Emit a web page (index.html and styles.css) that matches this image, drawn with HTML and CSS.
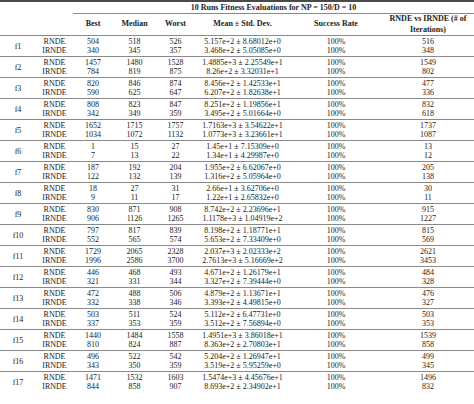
FILE: index.html
```html
<!DOCTYPE html>
<html>
<head>
<meta charset="utf-8">
<link rel="stylesheet" href="styles.css">
</head>
<body>
<table class="results">
  <colgroup>
    <col class="c-fn"><col class="c-alg"><col class="c-best"><col class="c-med"><col class="c-worst"><col class="c-mean"><col class="c-sr"><col class="c-vs">
  </colgroup>
  <thead>
    <tr class="title-row">
      <th class="blank"></th><th class="blank"></th>
      <th class="title" colspan="6">10 Runs Fitness Evaluations for NP = 150/D = 10</th>
    </tr>
    <tr class="head-row">
      <th></th><th></th>
      <th>Best</th><th>Median</th><th>Worst</th><th>Mean ± Std. Dev.</th><th>Success Rate</th><th>RNDE vs IRNDE (# of<br>Iterations)</th>
    </tr>
  </thead>
  <tbody>
    <tr><td>f1</td><td>RNDE<br>IRNDE</td><td>504<br>340</td><td>518<br>345</td><td>526<br>357</td><td>5.157e+2 ± 8.68012e+0<br>3.468e+2 ± 5.05085e+0</td><td>100%<br>100%</td><td>516<br>348</td></tr>
    <tr><td>f2</td><td>RNDE<br>IRNDE</td><td>1457<br>784</td><td>1480<br>819</td><td>1528<br>875</td><td>1.4885e+3 ± 2.25549e+1<br>8.26e+2 ± 3.32031e+1</td><td>100%<br>100%</td><td>1549<br>802</td></tr>
    <tr><td>f3</td><td>RNDE<br>IRNDE</td><td>820<br>590</td><td>846<br>625</td><td>874<br>647</td><td>8.456e+2 ± 1.42533e+1<br>6.207e+2 ± 1.82638e+1</td><td>100%<br>100%</td><td>477<br>336</td></tr>
    <tr><td>f4</td><td>RNDE<br>IRNDE</td><td>808<br>342</td><td>823<br>349</td><td>847<br>359</td><td>8.251e+2 ± 1.19856e+1<br>3.495e+2 ± 5.01664e+0</td><td>100%<br>100%</td><td>832<br>618</td></tr>
    <tr><td>f5</td><td>RNDE<br>IRNDE</td><td>1652<br>1034</td><td>1715<br>1072</td><td>1757<br>1132</td><td>1.7163e+3 ± 3.54622e+1<br>1.0773e+3 ± 3.23661e+1</td><td>100%<br>100%</td><td>1737<br>1087</td></tr>
    <tr><td>f6</td><td>RNDE<br>IRNDE</td><td>1<br>7</td><td>15<br>13</td><td>27<br>22</td><td>1.45e+1 ± 7.15309e+0<br>1.34e+1 ± 4.29987e+0</td><td>100%<br>100%</td><td>13<br>12</td></tr>
    <tr><td>f7</td><td>RNDE<br>IRNDE</td><td>187<br>122</td><td>192<br>132</td><td>204<br>139</td><td>1.955e+2 ± 6.62067e+0<br>1.316e+2 ± 5.05964e+0</td><td>100%<br>100%</td><td>205<br>138</td></tr>
    <tr><td>f8</td><td>RNDE<br>IRNDE</td><td>18<br>9</td><td>27<br>11</td><td>31<br>17</td><td>2.66e+1 ± 3.62706e+0<br>1.22e+1 ± 2.65832e+0</td><td>100%<br>100%</td><td>30<br>11</td></tr>
    <tr><td>f9</td><td>RNDE<br>IRNDE</td><td>830<br>906</td><td>871<br>1126</td><td>908<br>1265</td><td>8.742e+2 ± 2.23696e+1<br>1.1178e+3 ± 1.04919e+2</td><td>100%<br>100%</td><td>915<br>1227</td></tr>
    <tr><td>f10</td><td>RNDE<br>IRNDE</td><td>797<br>552</td><td>817<br>565</td><td>839<br>574</td><td>8.198e+2 ± 1.18771e+1<br>5.653e+2 ± 7.33409e+0</td><td>100%<br>100%</td><td>815<br>569</td></tr>
    <tr><td>f11</td><td>RNDE<br>IRNDE</td><td>1729<br>1996</td><td>2065<br>2586</td><td>2328<br>3700</td><td>2.037e+3 ± 2.02333e+2<br>2.7613e+3 ± 5.16669e+2</td><td>100%<br>100%</td><td>2621<br>3453</td></tr>
    <tr><td>f12</td><td>RNDE<br>IRNDE</td><td>446<br>321</td><td>468<br>331</td><td>493<br>344</td><td>4.671e+2 ± 1.26179e+1<br>3.327e+2 ± 7.39444e+0</td><td>100%<br>100%</td><td>484<br>328</td></tr>
    <tr><td>f13</td><td>RNDE<br>IRNDE</td><td>472<br>332</td><td>488<br>338</td><td>506<br>346</td><td>4.879e+2 ± 1.13671e+1<br>3.393e+2 ± 4.49815e+0</td><td>100%<br>100%</td><td>476<br>327</td></tr>
    <tr><td>f14</td><td>RNDE<br>IRNDE</td><td>503<br>337</td><td>511<br>353</td><td>524<br>359</td><td>5.112e+2 ± 6.47731e+0<br>3.512e+2 ± 7.56894e+0</td><td>100%<br>100%</td><td>503<br>353</td></tr>
    <tr><td>f15</td><td>RNDE<br>IRNDE</td><td>1440<br>810</td><td>1484<br>824</td><td>1558<br>887</td><td>1.4951e+3 ± 3.86018e+1<br>8.363e+2 ± 2.70803e+1</td><td>100%<br>100%</td><td>1539<br>858</td></tr>
    <tr><td>f16</td><td>RNDE<br>IRNDE</td><td>496<br>343</td><td>522<br>350</td><td>542<br>359</td><td>5.204e+2 ± 1.26947e+1<br>3.519e+2 ± 5.95259e+0</td><td>100%<br>100%</td><td>499<br>345</td></tr>
    <tr><td>f17</td><td>RNDE<br>IRNDE</td><td>1471<br>844</td><td>1532<br>858</td><td>1603<br>907</td><td>1.5474e+3 ± 4.45676e+1<br>8.693e+2 ± 2.34902e+1</td><td>100%<br>100%</td><td>1496<br>832</td></tr>
  </tbody>
</table>
</body>
</html>
```

FILE: styles.css
```css
html, body {
  margin: 0;
  padding: 0;
  background: #ffffff;
}

.results {
  width: 474px;
  table-layout: fixed;
  border-collapse: separate;
  border-spacing: 0;
  font-family: "Liberation Serif", "Times New Roman", serif;
  font-size: 8px;
  color: #222222;
  text-align: center;
}

.c-fn { width: 36px; }
.c-alg { width: 37px; }
.c-best { width: 40px; }
.c-med { width: 43px; }
.c-worst { width: 39px; }
.c-mean { width: 95px; }
.c-sr { width: 92px; }
.c-vs { width: 92px; }

.results th,
.results td {
  padding: 0;
  white-space: nowrap;
  vertical-align: middle;
}

.title-row th {
  border-top: 2.5px solid #4a4a4a;
  height: 11px;
  line-height: 11px;
  font-weight: bold;
}

.title-row .title {
  border-bottom: 1px solid #8a8a8a;
}

.head-row th {
  height: 20.8px;
  line-height: 10.5px;
  font-weight: bold;
}

.results tbody td {
  border-top: 1.5px solid #8a8a8a;
  padding: 1px 0;
  line-height: 9px;
}
```
